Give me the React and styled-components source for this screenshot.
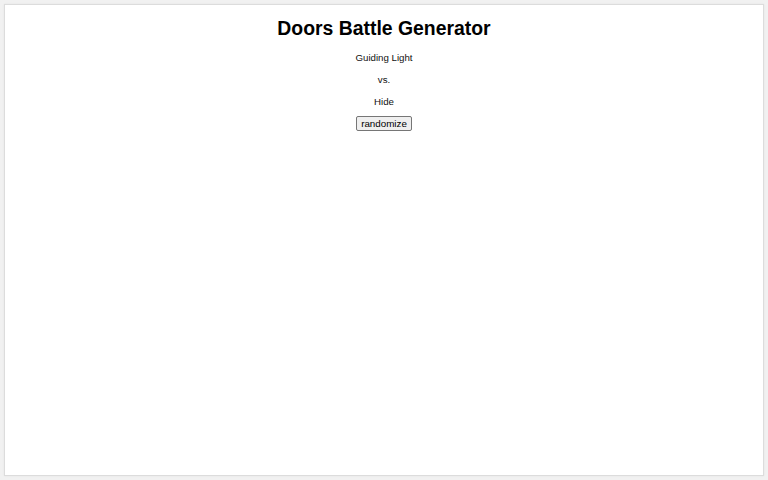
import React, { useState } from 'react';
import styled, { createGlobalStyle } from 'styled-components';

const GlobalStyle = createGlobalStyle`
  html, body {
    margin: 0;
    padding: 0;
    background: #f1f1f1;
    font-family: "Liberation Sans", Arial, sans-serif;
  }
`;

//흰 패널
const Panel = styled.div`
  box-sizing: border-box;
  margin: 4px;
  height: calc(100vh - 8px);
  background: #ffffff;
  border: 1px solid #dcdcdc;
  box-shadow: 0 0 2px rgba(0, 0, 0, 0.06);
  display: flex;
  flex-direction: column;
  align-items: center;
  overflow: hidden;
`;

//제목
const Title = styled.h1`
  margin: 12px 0 2px;
  font-size: 19.4px;
  line-height: 23px;
  font-weight: bold;
  color: #000;
`;

//대결 텍스트
const Line = styled.p`
  margin: 10px 0 0;
  font-size: 9.7px;
  line-height: 12px;
  color: #111;
`;

const Button = styled.button`
  margin-top: 8px;
  font-family: "Liberation Sans", Arial, sans-serif;
  font-size: 9.8px;
  line-height: 11px;
  padding: 1px 4px;
  color: #000;
  background: #efefef;
  border: 1px solid #767676;
  border-radius: 2px;
  cursor: pointer;
`;

const items = ['Guiding Light', 'Hide', 'Rush', 'Ambush', 'Seek', 'Figure', 'Screech', 'Halt', 'Eyes', 'Jack'];

const pick = (not) => {
  let v = items[Math.floor(Math.random() * items.length)];
  while (v === not) v = items[Math.floor(Math.random() * items.length)];
  return v;
};

const App = () => {
  const [pair, setPair] = useState(['Guiding Light', 'Hide']);

  const randomize = () => {
    const a = pick();
    setPair([a, pick(a)]);
  };

  return (
    <>
      <GlobalStyle />
      <Panel>
        <Title>Doors Battle Generator</Title>
        <Line>{pair[0]}</Line>
        <Line>vs.</Line>
        <Line>{pair[1]}</Line>
        <Button onClick={randomize}>randomize</Button>
      </Panel>
    </>
  );
};

export default App;
